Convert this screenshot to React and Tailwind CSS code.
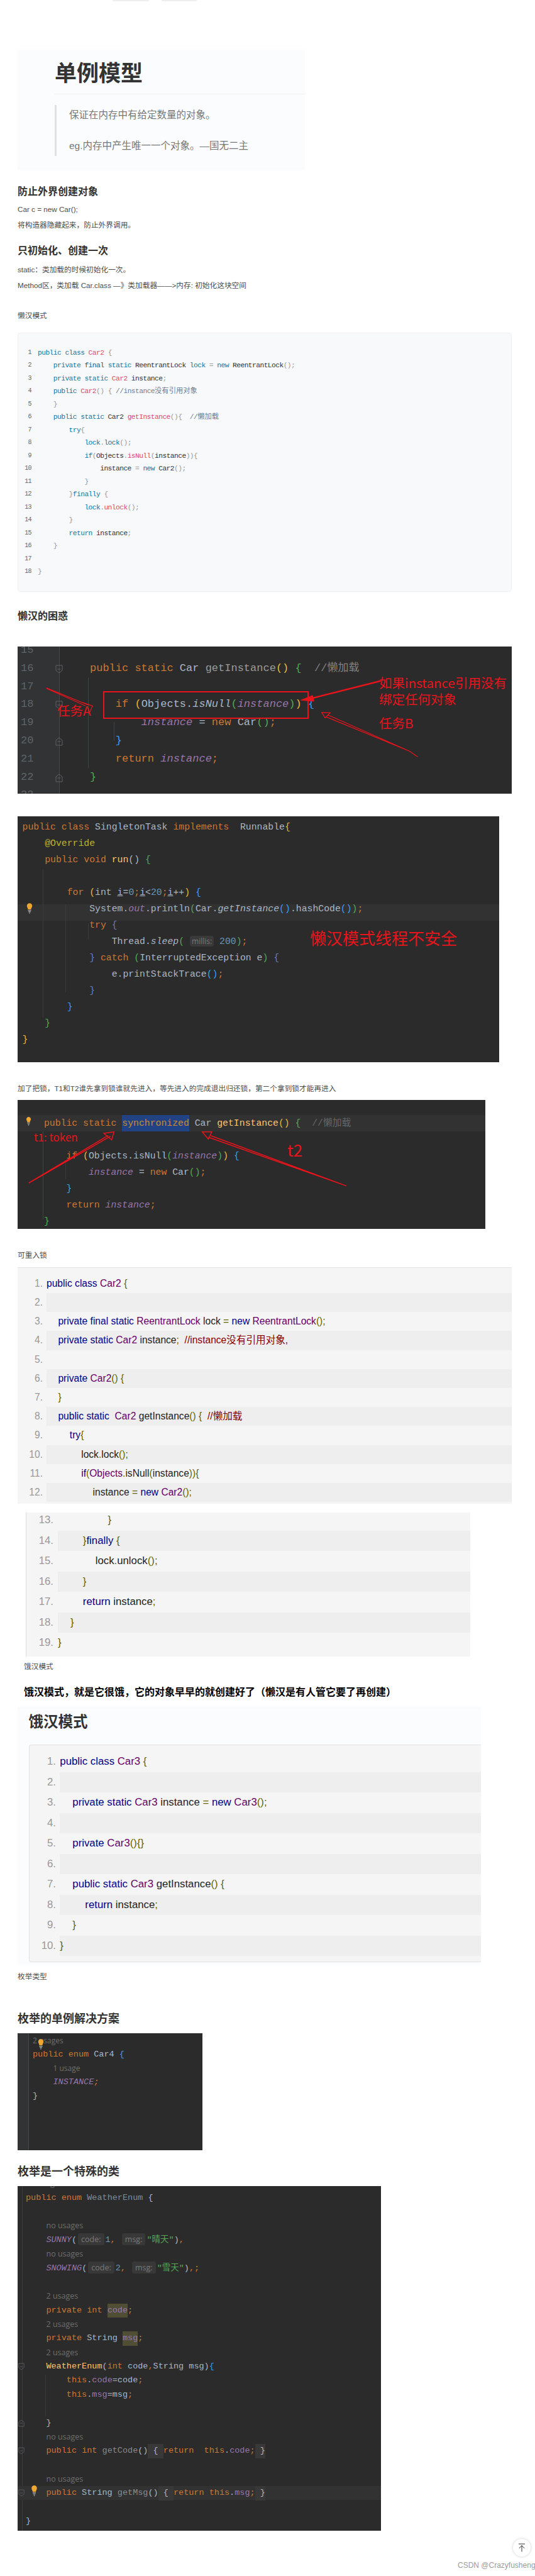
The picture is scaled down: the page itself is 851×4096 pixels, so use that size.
import React from "react";
import { ArrowUpToLine } from "lucide-react";

// tokens for the light "prism" block
const PK = ({ children }) => <span className="text-[#1578a0]">{children}</span>;
const PR = ({ children }) => <span className="text-[#dd4a68]">{children}</span>;
const PP = ({ children }) => <span className="text-[#999999]">{children}</span>;
const PC = ({ children }) => <span className="text-[#708090]">{children}</span>;
const CJ = ({ children }) => <span className="tracking-normal">{children}</span>;

// tokens for the old "prettify" blocks
const B = ({ children }) => <span className="text-[#000088]">{children}</span>;
const V = ({ children }) => <span className="text-[#660066]">{children}</span>;
const O = ({ children }) => <span className="text-[#666600]">{children}</span>;
const M = ({ children }) => <span className="text-[#880000]">{children}</span>;

// tokens for the IDE screenshots
const K = ({ children }) => <span className="text-[#cc7832]">{children}</span>;
const Y = ({ children }) => <span className="text-[#e8ba36]">{children}</span>;
const G = ({ children }) => <span className="text-[#54a857]">{children}</span>;
const L = ({ children }) => <span className="text-[#359ff4]">{children}</span>;
const I = ({ children }) => <span className="italic text-[#9876aa]">{children}</span>;
const D = ({ children }) => <span className="text-[#808080]">{children}</span>;
const F = ({ children }) => <span className="text-[#ffc66d]">{children}</span>;
const U = ({ children }) => <span className="underline">{children}</span>;
const N = ({ children }) => <span className="text-[#6897bb]">{children}</span>;

const Bulb = ({ className }) => (
  <svg viewBox="0 0 12 20" className={className}>
    <path d="M6 0a5 5 0 0 1 5 5.5c0 2.500-2 3.500-2 6.500H3c0-3-2-4-2-6.500A5 5 0 0 1 6 0z" fill="#f0a732" />
    <path d="M3 14h6M4 16.500h4M5 19h2" stroke="#b9b9b9" strokeWidth="1.400" />
  </svg>
);

const Fold = ({ className, up }) => (
  <svg viewBox="0 0 12 14" className={className} fill="none" stroke="#5f6265" strokeWidth="1">
    <path d={up ? "M1 13V5l5-4 5 4v8z" : "M1 1v8l5 4 5-4V1z"} />
    <path d="M3.500 7h5" />
  </svg>
);

const Prose = ({ children, className }) => (
  <p className={`h-5 text-[11.7px] leading-5 text-[#4d4d4d] ${className}`}>{children}</p>
);

const H3 = ({ children, className }) => (
  <h3 className={`h-6 text-base leading-6 font-bold text-[#333333] ${className}`}>{children}</h3>
);

const H2 = ({ children, className }) => (
  <h2 className={`h-[26px] text-lg leading-[26px] font-bold text-[#333333] ${className}`}>{children}</h2>
);

const PRISM = [
  <><PK>public</PK> <PK>class</PK> <PR>Car2</PR> <PP>{"{"}</PP></>,
  <>    <PK>private</PK> <span className="text-[#1f5f74]">final</span> <PK>static</PK> ReentrantLock <PK>lock</PK> <PP>=</PP> <PK>new</PK> ReentrantLock<PP>();</PP></>,
  <>    <PK>private</PK> <PK>static</PK> <PR>Car2</PR> instance<PP>;</PP></>,
  <>    <PK>public</PK> <PR>Car2</PR><PP>()</PP> <PP>{"{"}</PP> <PC>//instance<CJ>没有引用对象</CJ></PC></>,
  <>    <PP>{"}"}</PP></>,
  <>    <PK>public</PK> <PK>static</PK> Car2 <PR>getInstance</PR><PP>(){"{"}</PP>  <PC>//<CJ>懒加载</CJ></PC></>,
  <>        <PK>try</PK><PP>{"{"}</PP></>,
  <>            <PK>lock</PK><PP>.</PP><PK>lock</PK><PP>();</PP></>,
  <>            <PK>if</PK><PP>(</PP>Objects<PP>.</PP><PR>isNull</PR><PP>(</PP>instance<PP>)){"{"}</PP></>,
  <>                instance <PP>=</PP> <PK>new</PK> Car2<PP>();</PP></>,
  <>            <PP>{"}"}</PP></>,
  <>        <PP>{"}"}</PP><PK>finally</PK> <PP>{"{"}</PP></>,
  <>            <PK>lock</PK><PP>.</PP><PR>unlock</PR><PP>();</PP></>,
  <>        <PP>{"}"}</PP></>,
  <>        <PK>return</PK> instance<PP>;</PP></>,
  <>    <PP>{"}"}</PP></>,
  <></>,
  <><PP>{"}"}</PP></>,
];

const CAR2_A = [
  [0, <><B>public</B> <B>class</B> <V>Car2</V> <O>{"{"}</O></>],
  [0, null],
  [1, <><B>private</B> <B>final</B> <B>static</B> <V>ReentrantLock</V> lock <O>=</O> <B>new</B> <V>ReentrantLock</V><O>();</O></>],
  [1, <><B>private</B> <B>static</B> <V>Car2</V> instance<O>;</O>  <M>//instance没有引用对象,</M></>],
  [0, null],
  [1, <><B>private</B> <V>Car2</V><O>()</O> <O>{"{"}</O></>],
  [1, <O>{"}"}</O>],
  [1, <><B>public</B> <B>static</B>  <V>Car2</V> getInstance<O>()</O> <O>{"{"}</O>  <M>//懒加载</M></>],
  [2, <><B>try</B><O>{"{"}</O></>],
  [3, <>lock<O>.</O>lock<O>();</O></>],
  [3, <><B>if</B><O>(</O><V>Objects</V><O>.</O>isNull<O>(</O>instance<O>)){"{"}</O></>],
  [4, <>instance <O>=</O> <B>new</B> <V>Car2</V><O>();</O></>],
];

const CAR2_B = [
  [4, <O>{"}"}</O>, 13],
  [2, <><O>{"}"}</O><B>finally</B> <O>{"{"}</O></>, 14],
  [3, <>lock<O>.</O>unlock<O>();</O></>, 15],
  [2, <O>{"}"}</O>, 16],
  [2, <><B>return</B> instance<O>;</O></>, 17],
  [1, <O>{"}"}</O>, 18],
  [0, <O>{"}"}</O>, 19],
];

const CAR3 = [
  [0, <><B>public</B> <B>class</B> <V>Car3</V> <O>{"{"}</O></>],
  [0, null],
  [1, <><B>private</B> <B>static</B> <V>Car3</V> instance <O>=</O> <B>new</B> <V>Car3</V><O>();</O></>],
  [0, null],
  [1, <><B>private</B> <V>Car3</V><O>(){"{}"}</O></>],
  [0, null],
  [1, <><B>public</B> <B>static</B> <V>Car3</V> getInstance<O>()</O> <O>{"{"}</O></>],
  [2, <><B>return</B> instance<O>;</O></>],
  [1, <O>{"}"}</O>],
  [0, <O>{"}"}</O>],
];

const INDENT_A = ["", "pl-[18.4px]", "pl-[36.800px]", "pl-[55.200px]", "pl-[73.600px]"];
const INDENT_B = ["", "pl-[19.900px]", "pl-[39.800px]", "pl-[59.700px]", "pl-[79.600px]"];
const INDENT_C = ["", "pl-[20px]", "pl-[40px]"];

const ZebraRows = ({ rows, indents, rowClass, numClass, textClass }) =>
  rows.map(([level, code, num], i) => {
    const n = num || i + 1;
    return (
      <div key={n} className={`flex ${rowClass}`}>
        <div className={`shrink-0 text-right text-[#999999] ${numClass}`}>{n}.</div>
        <div className={`flex-1 whitespace-pre text-[#222222] ${textClass} ${n % 2 === 0 ? "bg-[#eeeeee]" : ""} ${indents[level]}`}>
          {code}
        </div>
      </div>
    );
  });

const Ide1 = () => {
  const nums = [15, 16, 17, 18, 19, 20, 21, 22, 23];
  const code = [
    null,
    <><K>public</K> <K>static</K> Car <span className="text-[#9a9a9a]">getInstance</span><Y>()</Y> <G>{"{"}</G>  <D>//懒加载</D></>,
    null,
    <>    <K>if</K> <Y>(</Y>Objects.<span className="italic">isNull</span><G>(</G><I>instance</I><G>)</G><Y>)</Y> <L>{"{"}</L></>,
    <>        <I>instance</I> = <K>new</K> Car<G>()</G><K>;</K></>,
    <>    <L>{"}"}</L></>,
    <>    <K>return</K> <I>instance</I><K>;</K></>,
    <G>{"}"}</G>,
    null,
  ];
  return (
    <div className="relative flex h-[234px] w-[786px] overflow-hidden bg-[#2b2b2b] font-['Liberation_Mono','Noto_Sans_CJK_SC',monospace] text-[17px] leading-[28.800px] text-[#a9b7c6]">
      <div className="-mt-[8px] w-[67px] shrink-0 border-r border-[#46484a] bg-[#313335] text-[#5f6467]">
        {nums.map((n) => (
          <div key={n} className="relative h-[28.800px] pl-[5px]">
            {n}
            {(n === 16 || n === 18) && <Fold className="absolute top-[8px] -right-[6px] h-[14px] w-[12px]" />}
            {(n === 20 || n === 22) && <Fold up className="absolute top-[8px] -right-[6px] h-[14px] w-[12px]" />}
          </div>
        ))}
      </div>
      <div className="-mt-[8px] flex-1 pl-[48px]">
        {code.map((c, i) => (
          <div key={i} className="h-[28.800px] whitespace-pre">{c}</div>
        ))}
      </div>
      {/* indent guides */}
      <div className="absolute top-[50px] left-[112px] h-[143px] w-px bg-[#3c4a3c]" />
      <div className="absolute top-[120px] left-[153px] h-[30px] w-px bg-[#3a4550]" />
      {/* red markup on top of the shot */}
      <div className="absolute top-[71px] left-[136px] h-[44px] w-[327px] border-2 border-[#e8141c]" />
      <svg viewBox="52 34 1451 565" preserveAspectRatio="none" className="absolute inset-0 h-full w-full" fill="none" stroke="#e8141c">
        <path d="M137 193L258 258M137 195L252 262M240 248L272 262L262 292" strokeWidth="1.200" vectorEffect="non-scaling-stroke" />
        <path d="M1118 166L900 238" strokeWidth="2.500" vectorEffect="non-scaling-stroke" />
        <path d="M884 240L918 222L922 244z" fill="#e8141c" strokeWidth="1" vectorEffect="non-scaling-stroke" />
        <path d="M1227 458L1203 436L962 296M1203 436L958 304M945 287L970 288L955 308z" strokeWidth="1.200" vectorEffect="non-scaling-stroke" />
      </svg>
      <div className="absolute top-[44px] left-[575px] font-['Noto_Sans_CJK_SC',sans-serif] text-[20.500px] leading-[26px] text-[#e8141c]">
        <div>如果instance引用没有</div>
        <div>绑定任何对象</div>
        <div className="mt-[12px]">任务B</div>
      </div>
      <div className="absolute top-[86px] left-[63px] font-['Noto_Sans_CJK_SC',sans-serif] text-[20.500px] leading-[30px] text-[#e8141c]">任务A</div>
    </div>
  );
};

const Ide2 = () => {
  const rows = [
    <><K>public</K> <K>class</K> SingletonTask <K>implements</K>  Runnable<Y>{"{"}</Y></>,
    <>    <span className="text-[#bbb529]">@Override</span></>,
    <>    <K>public</K> <K>void</K> <F>run</F>() <G>{"{"}</G></>,
    null,
    <>        <K>for</K> <Y>(</Y>int <U>i</U>=<N>0</N><K>;</K><U>i</U>{"<"}<N>20</N><K>;</K><U>i</U>++<Y>)</Y> <L>{"{"}</L></>,
    <>            System.<I>out</I>.println<G>(</G>Car.<span className="italic">getInstance</span><L>()</L>.hashCode<L>()</L><G>)</G><K>;</K></>,
    <>            <K>try</K> <span className="text-[#6a7bbd]">{"{"}</span></>,
    <>                Thread.<span className="italic">sleep</span><G>(</G> <span className="rounded bg-[#3a3a3a] px-[3px] font-['Open_Sans',sans-serif] text-[12px] text-[#787878]">millis:</span> <N>200</N><G>)</G><K>;</K></>,
    <>            <span className="text-[#6a7bbd]">{"}"}</span> <K>catch</K> <G>(</G>InterruptedException e<G>)</G> <span className="text-[#6a7bbd]">{"{"}</span></>,
    <>                e.printStackTrace<L>()</L><K>;</K></>,
    <>            <span className="text-[#6a7bbd]">{"}"}</span></>,
    <>        <L>{"}"}</L></>,
    <>    <G>{"}"}</G></>,
    <Y>{"}"}</Y>,
  ];
  return (
    <div className="relative h-[391px] w-[766px] overflow-hidden bg-[#2b2b2b] pt-[4.500px] pl-[7.600px] font-['Liberation_Mono','Noto_Sans_CJK_SC',monospace] text-[14.800px] leading-[26px] text-[#a9b7c6]">
      <div className="absolute top-[140px] left-0 h-[26px] w-full bg-[#323232]" />
      <div className="absolute top-[84px] left-[40px] h-[236px] w-px bg-[#3a3a3a]" />
      <div className="absolute top-[140px] left-[76px] h-[140px] w-px bg-[#3a3a3a]" />
      <div className="absolute top-[170px] left-[112px] h-[26px] w-px bg-[#3a3a3a]" />
      <div className="relative">
        {rows.map((r, i) => (
          <div key={i} className="h-[26px] whitespace-pre">{r}</div>
        ))}
      </div>
      <Bulb className="absolute top-[138px] left-[14px] h-[17px] w-[10px]" />
      <div className="absolute top-[175px] left-[465px] font-['Noto_Sans_CJK_SC',sans-serif] text-[26px] leading-[36px] text-[#e8141c]">懒汉模式线程不安全</div>
    </div>
  );
};

const Ide3 = () => {
  const rows = [
    <>    <K>public</K> <K>static</K> <span className="inline-block h-[26px] bg-[#214283] text-[#cc8a32]">synchronized</span> Car <F>getInstance</F><Y>()</Y> <G>{"{"}</G>  <span className="text-[#666666]">//懒加载</span></>,
    null,
    <>        <K>if</K> <Y>(</Y>Objects.isNull<G>(</G><I>instance</I><G>)</G><Y>)</Y> <L>{"{"}</L></>,
    <>            <I>instance</I> = <K>new</K> Car<G>()</G><K>;</K></>,
    <>        <L>{"}"}</L></>,
    <>        <K>return</K> <I>instance</I><K>;</K></>,
    <>    <G>{"}"}</G></>,
  ];
  return (
    <div className="relative h-[205px] w-[744px] overflow-hidden bg-[#2b2b2b] pt-[24px] pl-[6.400px] font-['Liberation_Mono','Noto_Sans_CJK_SC',monospace] text-[14.800px] leading-[26px] text-[#a9b7c6]">
      <div className="absolute top-[24px] left-0 h-[26px] w-full bg-[#323232]" />
      <div className="absolute top-[50px] left-[40px] h-[140px] w-px bg-[#3a4a3a]" />
      <div className="absolute top-[100px] left-[76px] h-[26px] w-px bg-[#3a3a3a]" />
      <div className="relative">
        {rows.map((r, i) => (
          <div key={i} className="h-[26px] whitespace-pre">{r}</div>
        ))}
      </div>
      <Bulb className="absolute top-[27px] left-[13px] h-[14px] w-[9px]" />
      <div className="absolute top-[47px] left-[26px] font-['Noto_Sans_CJK_SC',sans-serif] text-[17px] leading-[24px] text-[#e8141c]">t1: token</div>
      <div className="absolute top-[61px] left-[429px] font-['Noto_Sans_CJK_SC',sans-serif] text-[26px] leading-[36px] text-[#e8141c]">t2</div>
      <svg viewBox="52 367 1373 882" preserveAspectRatio="none" className="absolute inset-0 h-full w-full" fill="none" stroke="#e8141c">
        <path d="M85 935L318 610M85 935L325 615" strokeWidth="1.500" vectorEffect="non-scaling-stroke" />
        <path d="M335 585L305 595L328 640z" strokeWidth="1.500" vectorEffect="non-scaling-stroke" />
        <path d="M1017 955L620 612M1017 955L612 622" strokeWidth="1.500" vectorEffect="non-scaling-stroke" />
        <path d="M594 585L622 585L612 635z" strokeWidth="1.500" vectorEffect="non-scaling-stroke" />
      </svg>
    </div>
  );
};

const Ide4 = () => (
  <div className="relative flex h-[186px] w-[294px] overflow-hidden bg-[#2b2b2b] font-['Liberation_Mono',monospace] text-[13.500px] leading-[22px] text-[#a9b7c6]">
    <div className="w-[17.500px] shrink-0 border-r border-[#46484a] bg-[#313335]" />
    <div className="flex-1 pl-[6.500px] pt-[1.500px]">
      <div className="h-[22px] font-['Open_Sans',sans-serif] text-[12px] text-[#6e6e6e]">2 usages</div>
      <div className="h-[22px] whitespace-pre"><K>public</K> <K>enum</K> Car4 <L>{"{"}</L></div>
      <div className="h-[22px] pl-[32.500px] font-['Open_Sans',sans-serif] text-[12px] text-[#6e6e6e]">1 usage</div>
      <div className="h-[22px] pl-[32.500px] italic text-[#9876aa]">INSTANCE<K>;</K></div>
      <div className="h-[22px] text-[#a9b7c6]">{"}"}</div>
    </div>
    <Bulb className="absolute top-[9px] left-[32px] h-[17px] w-[10px]" />
  </div>
);

const Hint = ({ children }) => (
  <span className="mx-[2px] inline-block h-[19px] rounded-[3px] bg-[#383838] px-[5px] align-top font-['Open_Sans',sans-serif] text-[12.500px] leading-[20px] text-[#787878]">{children}</span>
);

const Use = ({ children }) => (
  <div className="h-[22.360px] pl-[32.500px] font-['Open_Sans',sans-serif] text-[12.500px] text-[#6e6e6e]">{children}</div>
);

const Ln = ({ children, className }) => (
  <div className={`relative h-[22.360px] whitespace-pre ${className || ""}`}>{children}</div>
);

const Mark = ({ children }) => <span className="inline-block h-[22.360px] bg-[#504f36] text-[#9876aa]">{children}</span>;
const Chip = ({ children }) => <span className="inline-block h-[22.360px] bg-[#383838]">{children}</span>;

const Ide5 = () => (
  <div className="relative h-[548px] w-[577.600px] overflow-hidden bg-[#2b2b2b] pl-[13px] font-['Liberation_Mono','Noto_Sans_CJK_SC',monospace] text-[13.500px] leading-[22.360px] text-[#a9b7c6]">
    <div className="absolute top-0 left-[7px] h-full w-px bg-[#3a3a3a]" />
    <div className="absolute top-[300px] left-[44px] h-[66px] w-px bg-[#3a3a3a]" />
    <div className="absolute top-[477px] left-0 h-[22.360px] w-full bg-[#323232]" />
    <div className="relative -mt-[14.500px]">
      <Use><span className="-ml-[32.500px]">no usages</span></Use>
      <Ln><K>public</K> <K>enum</K> <span className="text-[#7f8b96]">WeatherEnum</span> <span className="text-[#a9b7c6]">{"{"}</span></Ln>
      <Ln />
      <Use>no usages</Use>
      <Ln>    <I>SUNNY</I>(<Hint>code:</Hint><N>1</N><K>,</K> <Hint>msg:</Hint><G>"晴天"</G>)<K>,</K></Ln>
      <Use>no usages</Use>
      <Ln>    <I>SNOWING</I>(<Hint>code:</Hint><N>2</N><K>,</K> <Hint>msg:</Hint><G>"雪天"</G>)<K>,;</K></Ln>
      <Ln />
      <Use>2 usages</Use>
      <Ln>    <K>private</K> <K>int</K> <Mark>code</Mark><K>;</K></Ln>
      <Use>2 usages</Use>
      <Ln>    <K>private</K> String <Mark>msg</Mark><K>;</K></Ln>
      <Use>2 usages</Use>
      <Ln>    <F>WeatherEnum</F>(<K>int</K> code<K>,</K>String msg)<L>{"{"}</L><Fold className="absolute top-[5px] -left-[12px] h-[12px] w-[10px]" /></Ln>
      <Ln>        <K>this</K>.<span className="text-[#9876aa]">code</span>=code<K>;</K></Ln>
      <Ln>        <K>this</K>.<span className="text-[#9876aa]">msg</span>=msg<K>;</K></Ln>
      <Ln />
      <Ln>    {"}"}<Fold up className="absolute top-[5px] -left-[12px] h-[12px] w-[10px]" /></Ln>
      <Use>no usages</Use>
      <Ln>    <K>public</K> <K>int</K> <span className="text-[#8a8a8a]">getCode</span>()<Chip> {"{"} </Chip><K>return</K>  <K>this</K>.<span className="text-[#9876aa]">code</span><K>;</K><Chip> {"}"}</Chip><Fold className="absolute top-[5px] -left-[12px] h-[12px] w-[10px]" /></Ln>
      <Ln />
      <Use>no usages</Use>
      <Ln>    <K>public</K> String <span className="text-[#8a8a8a]">getMsg</span>()<Chip> {"{"} </Chip><K>return</K> <K>this</K>.<span className="text-[#9876aa]">msg</span><K>;</K><Chip> {"}"}</Chip><Fold className="absolute top-[5px] -left-[12px] h-[12px] w-[10px]" /></Ln>
      <Ln />
      <Ln>{"}"}</Ln>
    </div>
    <Bulb className="absolute top-[476px] left-[21px] h-[17px] w-[11px]" />
  </div>
);

export default function App() {
  return (
    <div className="relative h-[4096px] w-[851px] overflow-hidden bg-white font-['Liberation_Sans','Noto_Sans_CJK_SC',sans-serif]">
      {/* leftover toolbar chips at the very top */}
      <div className="flex h-[2px] gap-5 pl-[179px]">
        <div className="w-[58px] rounded-b bg-[#eeeeee]" />
        <div className="w-[56px] rounded-b bg-[#eeeeee]" />
      </div>

      <div className="pl-[28px]">
        {/* title card */}
        <div className="mt-[77px] h-[192px] w-[457px] bg-[#fbfcfe] pt-[18px] pl-[59px]">
          <h1 className="h-[53px] border-b border-[#eef0f3] pb-[13px] text-[35px] leading-[40px] font-bold text-[#333333]">单例模型</h1>
          <div className="mt-[17px] flex h-[81px] flex-col gap-[17px] border-l-[3px] border-[#dfe2e5] pl-5 text-[15.500px] leading-[32px] text-[#777777]">
            <div>保证在内存中有给定数量的对象。</div>
            <div>eg.内存中产生唯一一个对象。—国无二主</div>
          </div>
        </div>

        <H3 className="mt-[22px]">防止外界创建对象</H3>
        <Prose className="mt-[6px]">Car c = new Car();</Prose>
        <Prose className="mt-[5px]">将构造器隐藏起来，防止外界调用。</Prose>
        <H3 className="mt-[19px]">只初始化、创建一次</H3>
        <Prose className="mt-[7.500px]">static：类加载的时候初始化一次。</Prose>
        <Prose className="mt-[5.500px]">Method区，类加载 Car.class —》类加载器——&gt;内存: 初始化这块空间</Prose>
        <Prose className="mt-[28px]">懒汉模式</Prose>

        {/* lazy singleton code */}
        <div className="mt-[17px] h-[412px] w-[786px] rounded border border-[#f0f0f2] bg-[#f8f9fb] py-[20.500px] font-['Liberation_Mono','Noto_Sans_CJK_SC',monospace] text-[11.300px] leading-[20.500px] tracking-[-0.580px] text-[#333333]">
          {PRISM.map((line, i) => (
            <div key={i} className="flex h-[20.500px]">
              <div className="w-[21px] shrink-0 text-right text-[10px] text-[#666666]">{i + 1}</div>
              <div className="ml-[10px] whitespace-pre">{line}</div>
            </div>
          ))}
        </div>

        <H3 className="mt-[27px]">懒汉的困惑</H3>
        <div className="mt-[36px]"><Ide1 /></div>
        <div className="mt-[35.500px]"><Ide2 /></div>
        <Prose className="mt-[32.400px]">加了把锁，T1和T2谁先拿到锁谁就先进入，等先进入的完成退出归还锁，第二个拿到锁才能再进入</Prose>
        <div className="mt-[8px]"><Ide3 /></div>
        <Prose className="mt-[32px]">可重入锁</Prose>

        {/* reentrant lock code, two pasted pieces */}
        <div className="mt-[9px] h-[376.500px] w-[786px] border-t border-[#e3e3e3] bg-[#f5f5f5] pt-[10px]">
          <ZebraRows
            rows={CAR2_A}
            indents={INDENT_A}
            rowClass="h-[30.200px] text-[15.600px] leading-[30.200px]"
            numClass="w-[40px] pr-0"
            textClass="ml-[6px]"
          />
        </div>
        <div className="mt-[13.500px] ml-[13px] h-[229px] w-[706.500px] overflow-hidden border-l border-[#dddddd] bg-[#f5f5f5]">
          <div className="-mt-[3.900px]">
            <ZebraRows
              rows={CAR2_B}
              indents={INDENT_B}
              rowClass="h-[32.500px] text-[16.800px] leading-[32.500px]"
              numClass="w-[43px]"
              textClass="ml-[7px]"
            />
          </div>
        </div>

        <Prose className="mt-[6px] ml-[10px]">饿汉模式</Prose>
        <h3 className="mt-[19px] ml-[10px] h-6 text-base leading-6 font-bold text-black">饿汉模式，就是它很饿，它的对象早早的就创建好了（懒汉是有人管它要了再创建）</h3>

        {/* eager singleton card */}
        <div className="mt-[10px] h-[411.500px] w-[737px] bg-[#fbfcfe] pt-[10.600px] pl-[17.500px]">
          <div className="h-[30px] text-[23.500px] leading-[30px] font-bold text-[#333333]">饿汉模式</div>
          <div className="mt-[20.400px] h-[346px] rounded-l border-y border-l border-[#e3e3e3] bg-[#f5f5f5] pt-[10.500px]">
            <ZebraRows
              rows={CAR3}
              indents={INDENT_C}
              rowClass="h-[32.500px] text-[16.800px] leading-[32.500px]"
              numClass="w-[42.500px]"
              textClass="ml-[6.300px]"
            />
          </div>
        </div>

        <Prose className="mt-[8.500px]">枚举类型</Prose>
        <H2 className="mt-[44px]">枚举的单例解决方案</H2>
        <div className="mt-[10px]"><Ide4 /></div>
        <H2 className="mt-[21px]">枚举是一个特殊的类</H2>
        <div className="mt-[10px]"><Ide5 /></div>
      </div>

      {/* back to top */}
      <div className="absolute top-[4037px] left-[816px] flex h-7 w-7 items-center justify-center rounded-full bg-white shadow-[0_0_4px_rgba(0,0,0,0.2)]">
        <ArrowUpToLine size={16} strokeWidth={1.5} className="text-[#333333]" />
      </div>
      <div className="absolute top-[4071px] left-[728px] whitespace-nowrap text-xs leading-4 text-[#9a9a9a]">CSDN @Crazyfusheng</div>
    </div>
  );
}
